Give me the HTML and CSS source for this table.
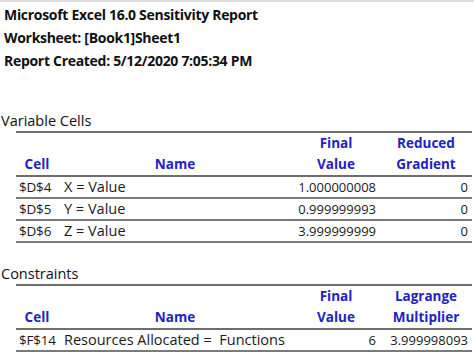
FILE: index.html
```html
<!DOCTYPE html>
<html>
<head>
<meta charset="utf-8">
<link rel="stylesheet" href="styles.css">
</head>
<body>
<div class="topbar"></div>
<div class="report-head">
  <div class="hline">Microsoft Excel 16.0 Sensitivity Report</div>
  <div class="hline">Worksheet: [Book1]Sheet1</div>
  <div class="hline">Report Created: 5/12/2020 7:05:34 PM</div>
</div>

<div class="section sec-var">
  <div class="sec-title">Variable Cells</div>
  <table class="grid">
    <colgroup><col class="c-cell"><col class="c-name"><col class="c-val"><col class="c-last"></colgroup>
    <thead>
      <tr class="h1"><th></th><th></th><th>Final</th><th>Reduced</th></tr>
      <tr class="h2"><th>Cell</th><th>Name</th><th>Value</th><th>Gradient</th></tr>
    </thead>
    <tbody>
      <tr><td class="cell">$D$4</td><td class="name">X = Value</td><td class="num">1.000000008</td><td class="num">0</td></tr>
      <tr><td class="cell">$D$5</td><td class="name">Y = Value</td><td class="num">0.999999993</td><td class="num">0</td></tr>
      <tr><td class="cell">$D$6</td><td class="name">Z = Value</td><td class="num">3.999999999</td><td class="num">0</td></tr>
    </tbody>
  </table>
</div>

<div class="section sec-con">
  <div class="sec-title">Constraints</div>
  <table class="grid">
    <colgroup><col class="c-cell"><col class="c-name"><col class="c-val"><col class="c-last"></colgroup>
    <thead>
      <tr class="h1"><th></th><th></th><th>Final</th><th>Lagrange</th></tr>
      <tr class="h2"><th>Cell</th><th>Name</th><th>Value</th><th>Multiplier</th></tr>
    </thead>
    <tbody>
      <tr><td class="cell">$F$14</td><td class="name">Resources Allocated = &nbsp;Functions</td><td class="num">6</td><td class="num">3.999998093</td></tr>
    </tbody>
  </table>
</div>
</body>
</html>
```

FILE: styles.css
```css
html, body {
  margin: 0;
  padding: 0;
  background: #ffffff;
}
body {
  font-family: "Open Sans", "Liberation Sans", sans-serif;
  font-size: 13px;
  color: #111;
  width: 474px;
  height: 353px;
  overflow: hidden;
}
.topbar {
  height: 2px;
  background: #dcdcdc;
}
.report-head {
  padding: 1px 0 0 4px;
}
.hline {
  font-weight: 700;
  font-size: 14px;
  line-height: 23px;
  letter-spacing: -0.3px;
}
.sec-var {
  margin-top: 39px;
}
.sec-con {
  margin-top: 21px;
}
.sec-title {
  padding-left: 1px;
  font-size: 14.5px;
  line-height: 20px;
  height: 20px;
}
.grid {
  margin-left: 16px;
  width: 456px;
  border-collapse: collapse;
  table-layout: fixed;
  border-top: 2px solid #6e6e6e;
}
.c-cell { width: 42px; }
.c-name { width: 234px; }
.c-val { width: 88px; }
.c-last { width: 92px; }
.grid th {
  color: #2222c4;
  font-weight: 700;
  text-align: center;
  height: 21px;
  padding: 0;
  font-size: 13.5px;
  line-height: 21px;
}
.grid thead tr.h2 th {
  border-bottom: 2px solid #6e6e6e;
}
.grid td {
  height: 20px;
  padding: 0 4px 0 3px;
  line-height: 20px;
  border-bottom: 2px solid #7a7a7a;
  white-space: nowrap;
  color: #1a1a1a;
}
.grid td.cell { padding-left: 3px; font-size: 13.5px; letter-spacing: -0.2px; }
.grid td.name { padding-left: 6px; font-size: 14.5px; }
.grid td.num { text-align: right; font-size: 13px; }
```
